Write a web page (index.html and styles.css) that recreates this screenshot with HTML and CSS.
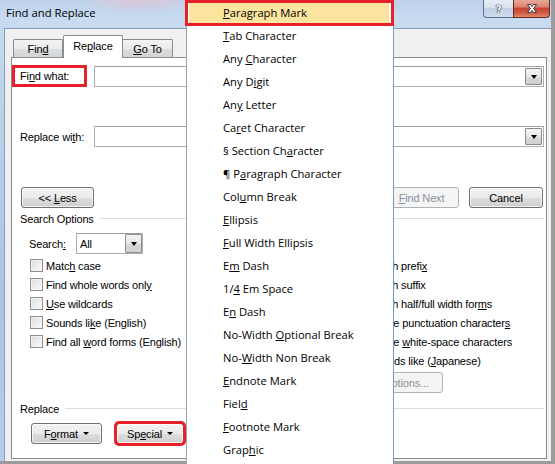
FILE: index.html
```html
<!DOCTYPE html>
<html lang="en">
<head>
<meta charset="utf-8">
<title>Find and Replace</title>
<link rel="stylesheet" href="styles.css">
</head>
<body>
<div class="window">
  <header class="titlebar">
    <span class="title">Find and Replace</span>
    <div class="caption-buttons">
      <span class="cap help">?</span>
      <span class="cap close">
        <svg width="12" height="11" viewBox="0 0 12 11">
          <path d="M1.5 1.5 L4.5 1.5 L6 3.6 L7.5 1.5 L10.5 1.5 L7.6 5.5 L10.5 9.5 L7.5 9.5 L6 7.4 L4.5 9.5 L1.5 9.5 L4.4 5.5 Z" fill="#fff" stroke="#3b3b3b" stroke-width="1" stroke-linejoin="round"/>
        </svg>
      </span>
    </div>
  </header>

  <div class="client">
    <div class="tabs">
      <span class="tab"><span>Fin<u>d</u></span></span>
      <span class="tab active"><span>Re<u>p</u>lace</span></span>
      <span class="tab"><span><u>G</u>o To</span></span>
    </div>

    <div class="panel">
      <div class="row find-row">
        <span class="mark-box"><span>Fi<u>n</u>d what:</span></span>
        <div class="combo wide"><span class="drop"><i class="arrow"></i></span></div>
      </div>

      <div class="row replace-row">
        <span class="field-label">Replace wi<u>t</u>h:</span>
        <div class="combo wide"><span class="drop"><i class="arrow"></i></span></div>
      </div>

      <div class="row button-row">
        <button class="btn less"><span>&lt;&lt; <u>L</u>ess</span></button>
        <div class="actions">
          <button class="btn" disabled><span><u>F</u>ind Next</span></button>
          <button class="btn"><span>Cancel</span></button>
        </div>
      </div>

      <div class="section-head">
        <span>Search Options</span>
        <span class="rule"></span>
      </div>

      <div class="options">
        <div class="opt-col left">
          <div class="search-row">
            <span class="search-label">Search<u>:</u></span>
            <div class="combo small">
              <span class="value">All</span>
              <span class="drop list"><i class="arrow"></i></span>
            </div>
          </div>
          <div class="checks">
            <span class="check"><span class="box"></span><span>Matc<u>h</u> case</span></span>
            <span class="check"><span class="box"></span><span>Find whole words onl<u>y</u></span></span>
            <span class="check"><span class="box"></span><span><u>U</u>se wildcards</span></span>
            <span class="check"><span class="box"></span><span>Sounds li<u>k</u>e (English)</span></span>
            <span class="check"><span class="box"></span><span>Find all <u>w</u>ord forms (English)</span></span>
          </div>
        </div>
        <div class="opt-col right">
          <span class="check"><span class="box"></span><span>Match prefi<u>x</u></span></span>
          <span class="check"><span class="box"></span><span>Match suffix</span></span>
          <span class="check"><span class="box"></span><span>Match half/full width for<u>m</u>s</span></span>
          <span class="check"><span class="box"></span><span>Ignore punctuation character<u>s</u></span></span>
          <span class="check"><span class="box"></span><span>Ignore <u>w</u>hite-space characters</span></span>
          <span class="check"><span class="box"></span><span>Sounds like (<u>J</u>apanese)</span></span>
          <button class="btn opt-btn" disabled><span>Options...</span></button>
        </div>
      </div>

      <div class="section-head replace-head">
        <span>Replace</span>
        <span class="rule"></span>
      </div>

      <div class="row format-row">
        <button class="btn menu-btn"><span>F<u>o</u>rmat</span><i class="caret"></i></button>
        <button class="btn menu-btn special"><span>Sp<u>e</u>cial</span><i class="caret"></i></button>
      </div>
    </div>
  </div>

  <ul class="special-menu">
    <li class="item current"><u>P</u>aragraph Mark</li>
    <li class="item"><u>T</u>ab Character</li>
    <li class="item">Any <u>C</u>haracter</li>
    <li class="item">Any D<u>i</u>git</li>
    <li class="item">An<u>y</u> Letter</li>
    <li class="item">Ca<u>r</u>et Character</li>
    <li class="item">§ Section Ch<u>a</u>racter</li>
    <li class="item">¶ P<u>a</u>ragraph Character</li>
    <li class="item">Col<u>u</u>mn Break</li>
    <li class="item"><u>E</u>llipsis</li>
    <li class="item"><u>F</u>ull Width Ellipsis</li>
    <li class="item">E<u>m</u> Dash</li>
    <li class="item">1/<u>4</u> Em Space</li>
    <li class="item">E<u>n</u> Dash</li>
    <li class="item">No-Width <u>O</u>ptional Break</li>
    <li class="item">No-<u>W</u>idth Non Break</li>
    <li class="item"><u>E</u>ndnote Mark</li>
    <li class="item">Fiel<u>d</u></li>
    <li class="item"><u>F</u>ootnote Mark</li>
    <li class="item">Grap<u>h</u>ic</li>
    <li class="focus-ring"></li>
  </ul>
</div>
</body>
</html>
```

FILE: styles.css
```css
* { box-sizing: border-box; }

html, body {
  margin: 0;
  padding: 0;
}

body {
  width: 555px;
  height: 464px;
  overflow: hidden;
  background: #9b9b9b;
  font-family: "Liberation Sans", Arial, sans-serif;
  font-size: 11px;
  letter-spacing: -0.15px;
  color: #000;
}

u { text-decoration: underline; text-underline-offset: 1px; }

/* ---------- window frame ---------- */
.window {
  position: relative;
  width: 551px;
  height: 461px;
  display: flex;
  flex-direction: column;
  background:
    radial-gradient(ellipse 60px 14px at 140px 0px, rgba(226, 196, 210, 0.8), rgba(226, 196, 210, 0) 100%),
    radial-gradient(ellipse 80px 20px at 300px 4px, rgba(215, 228, 244, 0.9), rgba(215, 228, 244, 0) 100%),
    linear-gradient(180deg, #bdd2eb 0px, #c8dbf0 20px, #b9d0ea 120px, #a9c4e4 300px, #b4cdea 461px);
}

.titlebar {
  height: 28px;
  flex: none;
  display: flex;
  align-items: flex-start;
}

.title {
  padding-left: 6px;
  line-height: 25px;
  font-family: "Open Sans", "Noto Sans", sans-serif;
  font-size: 11.3px;
  letter-spacing: 0;
  color: #000;
}

.caption-buttons {
  margin-left: auto;
  margin-right: 1px;
  display: flex;
}

.cap {
  height: 18px;
  display: flex;
  align-items: center;
  justify-content: center;
  border: 1px solid #5c6f8d;
  border-top: none;
}

.help {
  width: 30px;
  border-right: none;
  border-bottom-left-radius: 4px;
  background: linear-gradient(180deg, #e6eef8 0%, #d7e2f0 45%, #c2d1e5 50%, #cfdcec 100%);
  font-family: "DejaVu Sans", sans-serif;
  font-weight: bold;
  font-size: 11px;
  color: #f4f6f9;
  text-shadow: 0 0 1px #333, 0 0 1px #333, 0 0 1px #333;
  padding-top: 1px;
}

.close {
  width: 37px;
  border-color: #6a2a22;
  border-bottom-right-radius: 4px;
  background: linear-gradient(180deg, #e9a99a 0%, #d98371 40%, #c7452f 50%, #d0604a 80%, #e08a6c 100%);
}

/* ---------- client area ---------- */
.client {
  flex: 1;
  margin-left: 4px;
  border-left: 1px solid #8a9cb4;
  border-top: 1px solid #8a9cb4;
  background: #f0f0f0;
  padding: 6px 4px 2px 6px;
  display: flex;
  flex-direction: column;
}

.tabs {
  height: 22px;
  flex: none;
  display: flex;
  align-items: flex-end;
  padding-left: 2px;
}

.tab {
  height: 18px;
  display: flex;
  align-items: center;
  justify-content: center;
  border: 1px solid #898c95;
  border-bottom: none;
  border-radius: 2px 2px 0 0;
  background: linear-gradient(180deg, #f3f3f3 0%, #ebebeb 50%, #dddddd 51%, #d5d5d5 100%);
  padding-top: 1px;
}

.tab:nth-child(1) { width: 50px; }
.tab:nth-child(3) { width: 51px; margin-left: -1px; }

.tab.active {
  width: 60px;
  height: 23px;
  margin-bottom: -1px;
  margin-left: 0;
  background: #fff;
  position: relative;
  z-index: 2;
  padding-top: 0;
  padding-bottom: 2px;
}

.panel {
  flex: 1;
  border: 1px solid #898c95;
  background: #fff;
  display: flex;
  flex-direction: column;
}

.row {
  display: flex;
  flex: none;
}

/* ---------- find / replace fields ---------- */
.find-row {
  margin-top: 7px;
  height: 22px;
}

.mark-box {
  width: 75px;
  height: 22px;
  border: 3px solid #e8202a;
  padding-left: 5px;
  display: flex;
  align-items: center;
}

.combo {
  height: 21px;
  border: 1px solid #abadb3;
  border-top-color: #a0a0a0;
  background: #fff;
  display: flex;
  justify-content: flex-end;
  align-items: center;
}

.combo.wide {
  width: 450px;
  margin-left: 7px;
  align-self: flex-end;
}

.drop {
  width: 17px;
  height: 17px;
  margin-right: 1px;
  border: 1px solid #8a8a8a;
  border-radius: 1px;
  background: linear-gradient(180deg, #f4f4f4 0%, #e8e8e8 50%, #d9d9d9 51%, #cfcfcf 100%);
  display: flex;
  align-items: center;
  justify-content: center;
}

.arrow {
  width: 0;
  height: 0;
  border-left: 3.5px solid transparent;
  border-right: 3.5px solid transparent;
  border-top: 4px solid #000;
  margin-top: 1px;
}

.replace-row {
  margin-top: 39px;
  height: 21px;
  padding-left: 8px;
  align-items: center;
}

.field-label { width: 74px; }

.replace-row .combo.wide { margin-left: 0; }

/* ---------- push buttons ---------- */
.btn {
  height: 21px;
  width: 75px;
  padding: 0;
  border: 1px solid #707070;
  border-radius: 3px;
  background: linear-gradient(180deg, #f2f2f2 0%, #ebebeb 50%, #dddddd 51%, #cfcfcf 100%);
  box-shadow: inset 0 0 0 1px rgba(255, 255, 255, 0.7);
  font: inherit;
  letter-spacing: inherit;
  color: #000;
  display: flex;
  align-items: center;
  justify-content: center;
  white-space: nowrap;
}

.btn:disabled {
  border-color: #adb2b5;
  background: #f4f4f4;
  box-shadow: none;
  color: #8a939c;
}

.button-row {
  margin-top: 40px;
  height: 21px;
  padding-left: 9px;
  padding-right: 3px;
}

.btn.less { width: 73px; }

.actions {
  margin-left: auto;
  display: flex;
  gap: 10px;
}

.actions .btn:last-child { width: 74px; }

/* ---------- group headings ---------- */
.section-head {
  flex: none;
  margin-top: 4px;
  height: 14px;
  line-height: 14px;
  padding-left: 8px;
  padding-right: 2px;
  display: flex;
}

.rule {
  flex: 1;
  height: 1px;
  margin-top: 6px;
  margin-left: 6px;
  background: #d5dfe5;
}

/* ---------- search options ---------- */
.options {
  flex: none;
  margin-top: 7px;
  display: flex;
}

.opt-col { display: flex; flex-direction: column; }

.opt-col.left {
  width: 341px;
  padding-left: 17px;
}

.search-row {
  height: 21px;
  display: flex;
  align-items: center;
}

.search-label { width: 47px; }

.combo.small {
  width: 67px;
  justify-content: space-between;
}

.combo.small .value { padding-left: 3px; }

.drop.list {
  height: 19px;
  margin-right: 0;
  border-color: #8f8f8f;
}

.checks {
  margin-top: 2px;
  padding-left: 1px;
  display: flex;
  flex-direction: column;
}

.check {
  height: 19px;
  display: flex;
  align-items: center;
  white-space: nowrap;
}

.box {
  width: 13px;
  height: 13px;
  margin-right: 3px;
  flex: none;
  border: 1px solid #8f8f8f;
  background: linear-gradient(135deg, #dcdcdc 0%, #ececec 50%, #fbfbfb 100%);
  box-shadow: inset 0 0 0 1px #f2f2f2;
}

.opt-col.right {
  padding-top: 23px;
}

.btn.opt-btn {
  margin-top: 2px;
  margin-left: 16px;
  width: 74px;
}

/* ---------- replace formatting ---------- */
.replace-head { margin-top: 9px; }

.format-row {
  margin-top: 7px;
  height: 21px;
  padding-left: 19px;
}

.menu-btn { width: 71px; gap: 5px; }

.menu-btn.special {
  width: 68px;
  margin-left: 14px;
  outline: 3px solid #e8202a;
  outline-offset: -1px;
}

.caret {
  width: 0;
  height: 0;
  border-left: 3px solid transparent;
  border-right: 3px solid transparent;
  border-top: 3px solid #000;
}

/* ---------- Special popup menu ---------- */
.special-menu {
  position: absolute;
  left: 186px;
  top: 0;
  width: 208px;
  height: 480px;
  margin: 0;
  padding: 1px 0 0;
  list-style: none;
  background: #fff;
  border-left: 1px solid #9aa5b6;
  border-right: 1px solid #7c97c6;
  font-family: "Open Sans", "Noto Sans", sans-serif;
  font-size: 11.2px;
  letter-spacing: 0;
  z-index: 5;
}

.item {
  height: 23px;
  line-height: 23px;
  padding-left: 36px;
  white-space: nowrap;
}

.item.current {
  height: 20px;
  line-height: 20px;
  margin: 2px 4px 1px 2px;
  padding-left: 34px;
  background: #fde59f;
}

.focus-ring {
  position: absolute;
  left: -2px;
  top: 0;
  width: 209px;
  height: 26px;
  border: 3px solid #e8202a;
}
```
